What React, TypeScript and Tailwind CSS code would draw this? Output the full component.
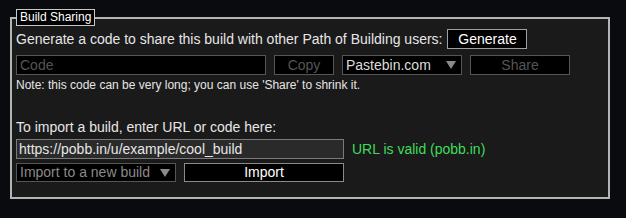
import React from 'react';

const Arrow: React.FC = () => (
  <svg width="10" height="8" viewBox="0 0 10 8" className="shrink-0">
    <path d="M0 0 H10 L5 8 Z" fill="#8a8a8a" />
  </svg>
);

export default function App() {
  return (
    <div className="w-[626px] h-[218px] bg-[#0a0b0e] pt-[17px] pl-[10px] font-['Liberation_Sans',Arial,sans-serif] text-[14px] leading-[20px] text-[#e6e6e6]">
      <div className="relative w-[600px] h-[182px] border-2 border-[#b4b4b4] bg-[#1a1a1a] px-[4px] pt-[10px]">
        {/* title tag over the border */}
        <div className="absolute left-[4px] top-[-10px] h-[17px] px-[3px] border border-[#c8c8c8] bg-black text-[12px] leading-[15px] text-white">
          Build Sharing
        </div>

        <div className="flex items-center h-[20px]">
          <span>Generate a code to share this build with other Path of Building users:</span>
          <button className="ml-[5px] w-[80px] h-[20px] bg-black border border-[#a0a0a0] text-white leading-[18px]">
            Generate
          </button>
        </div>

        <div className="flex items-center gap-[8px] mt-[6px] h-[20px]">
          <div className="w-[250px] h-[20px] bg-black border border-[#555] px-[3px] text-[#555] leading-[18px]">
            Code
          </div>
          <button className="w-[60px] h-[20px] bg-black border border-[#555] text-[#555] leading-[18px]">
            Copy
          </button>
          <div className="w-[120px] h-[20px] bg-black border border-[#555] pl-[3px] pr-[5px] flex items-center justify-between text-[#dcdcdc]">
            <span className="leading-[18px]">Pastebin.com</span>
            <Arrow />
          </div>
          <button className="w-[100px] h-[20px] bg-black border border-[#555] text-[#555] leading-[18px]">
            Share
          </button>
        </div>

        <div className="mt-[3px] text-[12px] leading-[14px] text-[#e6e6e6]">
          Note: this code can be very long; you can use 'Share' to shrink it.
        </div>

        <div className="mt-[26px] leading-[18px]">To import a build, enter URL or code here:</div>

        <div className="flex items-center gap-[8px] mt-[3px] h-[20px]">
          <div className="w-[328px] h-[20px] bg-[#2a2a2a] border border-[#7a7a7a] px-[2px] leading-[18px] text-[#e6e6e6]">
            https://pobb.in/u/example/cool_build
          </div>
          <span className="text-[#3fdc5c]">URL is valid (pobb.in)</span>
        </div>

        <div className="flex items-center gap-[8px] mt-[4px] h-[19px]">
          <div className="w-[160px] h-[19px] bg-black border border-[#555] pl-[3px] pr-[5px] flex items-center justify-between text-[#8a8a8a]">
            <span className="leading-[17px]">Import to a new build</span>
            <Arrow />
          </div>
          <button className="w-[160px] h-[19px] bg-black border border-[#8a8a8a] text-white leading-[17px]">
            Import
          </button>
        </div>
      </div>
    </div>
  );
}
